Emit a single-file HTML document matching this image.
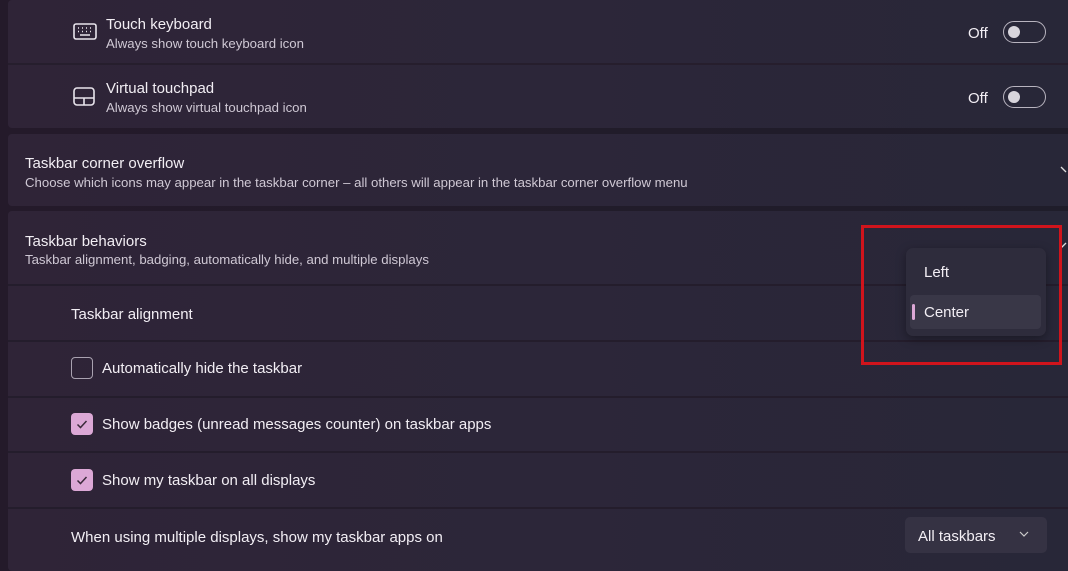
<!DOCTYPE html>
<html><head><style>
*{margin:0;padding:0;box-sizing:border-box}
body{width:1068px;height:559px;overflow:hidden;background:linear-gradient(90deg,#241a2a,#1f1d2a);font-family:"Liberation Sans",sans-serif;color:#fff;position:relative}
.card{position:absolute;left:8px;right:-10px;background:linear-gradient(90deg,#2f2437 0%,#2c2639 50%,#282738 100%);border-radius:4px}
.line{position:absolute;left:8px;right:0;height:2px;background:#241d2c}
.t{position:absolute;font-size:15px;color:#f2eef4;white-space:nowrap;margin-top:2px}
.s{position:absolute;font-size:13.2px;color:#cfc8d4;white-space:nowrap;margin-top:1px}
.tog{position:absolute;width:43px;height:22px;border:1.5px solid #b8b4bf;border-radius:11px}
.tog::after{content:"";position:absolute;left:4px;top:3.5px;width:12px;height:12px;border-radius:50%;background:#d8d5dc}
.cb{position:absolute;left:71px;width:22px;height:22px;border-radius:4px}
</style></head><body>
<div class="card" style="top:0;height:128px"></div>
<div class="line" style="top:63px;left:8px;background:#261e2d"></div>
<div class="card" style="top:134px;height:72px"></div>
<div class="card" style="top:211px;height:360px"></div>
<div class="line" style="top:284px"></div>
<div class="line" style="top:340px"></div>
<div class="line" style="top:396px"></div>
<div class="line" style="top:451px"></div>
<div class="line" style="top:507px"></div>

<svg style="position:absolute;left:73px;top:23px" width="24" height="17" viewBox="0 0 24 17" fill="none" stroke="#e8e4ec" stroke-width="1.6"><rect x="1" y="1" width="22" height="15" rx="2"/><path d="M5 5h1M9 5h1M13 5h1M17 5h1M5 8.5h1M9 8.5h1M13 8.5h1M17 8.5h1M7 12h10"/></svg>
<div class="t" style="left:106px;top:14px">Touch keyboard</div>
<div class="s" style="left:106px;top:35px">Always show touch keyboard icon</div>
<div class="t" style="left:968px;top:23px">Off</div>
<div class="tog" style="left:1003px;top:21px"></div>

<svg style="position:absolute;left:73px;top:87px" width="22" height="19" viewBox="0 0 22 19" fill="none" stroke="#e8e4ec" stroke-width="1.6"><rect x="1" y="1" width="20" height="17" rx="3"/><path d="M1 11h20M11 11v7"/></svg>
<div class="t" style="left:106px;top:78px">Virtual touchpad</div>
<div class="s" style="left:106px;top:99px">Always show virtual touchpad icon</div>
<div class="t" style="left:968px;top:88px">Off</div>
<div class="tog" style="left:1003px;top:86px"></div>

<div class="t" style="left:25px;top:153px">Taskbar corner overflow</div>
<div class="s" style="left:25px;top:174px">Choose which icons may appear in the taskbar corner – all others will appear in the taskbar corner overflow menu</div>
<svg style="position:absolute;left:1060px;top:165px" width="10" height="10"><path d="M1 2l5 5" stroke="#ddd" stroke-width="1.3" fill="none"/></svg>

<div class="t" style="left:25px;top:231px">Taskbar behaviors</div>
<div class="s" style="left:25px;top:251px">Taskbar alignment, badging, automatically hide, and multiple displays</div>
<svg style="position:absolute;left:1060px;top:240px" width="10" height="10"><path d="M1 8l5 -5" stroke="#ddd" stroke-width="1.3" fill="none"/></svg>

<div class="t" style="left:71px;top:304px">Taskbar alignment</div>

<div class="cb" style="top:357px;border:1.5px solid #a9a2b0"></div>
<div class="t" style="left:102px;top:358px">Automatically hide the taskbar</div>
<div class="cb" style="top:413px;background:#dca8d6"><svg width="22" height="22"><path d="M6.5 11.5l3 3 6-6.5" stroke="#3a2a3a" stroke-width="1.5" fill="none"/></svg></div>
<div class="t" style="left:102px;top:414px">Show badges (unread messages counter) on taskbar apps</div>
<div class="cb" style="top:469px;background:#dca8d6"><svg width="22" height="22"><path d="M6.5 11.5l3 3 6-6.5" stroke="#3a2a3a" stroke-width="1.5" fill="none"/></svg></div>
<div class="t" style="left:102px;top:470px">Show my taskbar on all displays</div>
<div class="t" style="left:71px;top:527px">When using multiple displays, show my taskbar apps on</div>
<div style="position:absolute;left:905px;top:517px;width:142px;height:36px;background:#353243;border-radius:5px"></div>
<div class="t" style="left:918px;top:526px">All taskbars</div>
<svg style="position:absolute;left:1019px;top:531px" width="10" height="7"><path d="M1 1l4 4 4-4" stroke="#ccc" stroke-width="1.2" fill="none"/></svg>

<div style="position:absolute;left:906px;top:248px;width:140px;height:88px;background:#2e2c3c;border-radius:7px;box-shadow:0 3px 10px rgba(0,0,0,.35)"></div>
<div style="position:absolute;left:910px;top:295px;width:131px;height:34px;background:#393747;border-radius:4px"></div>
<div style="position:absolute;left:912px;top:304px;width:3px;height:16px;background:#dca8d6;border-radius:2px"></div>
<div class="t" style="left:924px;top:262px">Left</div>
<div class="t" style="left:924px;top:302px">Center</div>
<div style="position:absolute;left:861px;top:225px;width:201px;height:140px;border:3px solid #d0141c"></div>
</body></html>
